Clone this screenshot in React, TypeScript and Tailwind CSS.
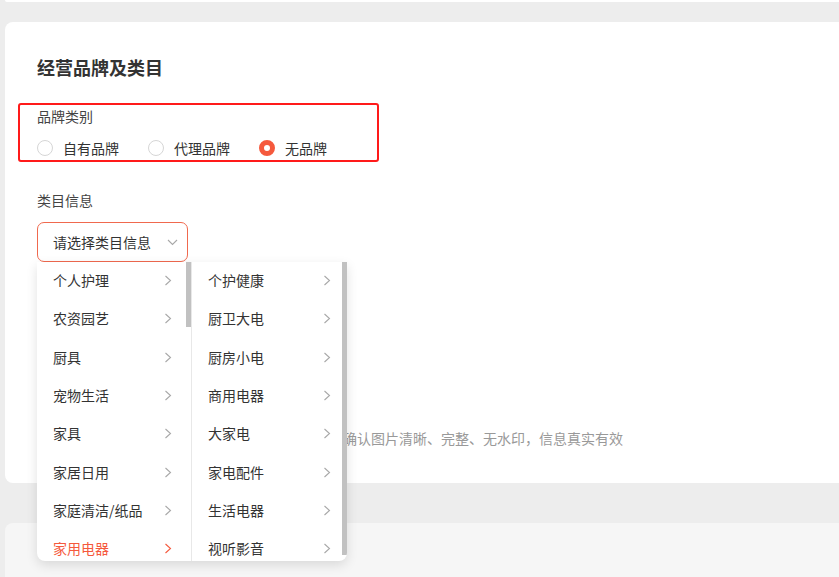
import React from "react";

const col1 = ["个人护理", "农资园艺", "厨具", "宠物生活", "家具", "家居日用", "家庭清洁/纸品", "家用电器"];
const col2 = ["个护健康", "厨卫大电", "厨房小电", "商用电器", "大家电", "家电配件", "生活电器", "视听影音"];

function Chevron({ active }: { active?: boolean }) {
  return (
    <svg width="8" height="11" viewBox="0 0 8 11" fill="none">
      <polyline points="1.5,1 6.5,5.5 1.5,10" stroke={active ? "#f5593d" : "#a8a8a8"} strokeWidth="1.1" />
    </svg>
  );
}

function Radio({ checked, label }: { checked?: boolean; label: string }) {
  return (
    <div className="flex items-center">
      {checked ? (
        <span className="w-4 h-4 rounded-full border-[5px] border-[#f5593d] bg-white box-border" />
      ) : (
        <span className="w-4 h-4 rounded-full border border-[#d6d6d6] bg-white box-border" />
      )}
      <span className="ml-[10px] text-[14px] leading-5 text-[#333]">{label}</span>
    </div>
  );
}

export default function App() {
  return (
    <div
      className="w-[839px] h-[577px] overflow-hidden bg-[#ededed] relative"
      style={{ fontFamily: '"Noto Sans CJK SC", "Noto Sans", sans-serif' }}
    >
      <div className="ml-[5px] w-[860px] h-[2px] bg-white rounded-b-lg" />
      <div className="relative mt-[20px] ml-[5px] w-[860px] h-[461px] bg-white rounded-lg pl-[32px] pt-[32px]">
        <div className="text-[18px] leading-[26px] font-bold text-[#333]">经营品牌及类目</div>

        <div className="mt-[26px] text-[14px] leading-5 text-[#444]">品牌类别</div>
        <div className="mt-[12px] flex items-center">
          <div className="w-[111px]"><Radio label="自有品牌" /></div>
          <div className="w-[111px]"><Radio label="代理品牌" /></div>
          <div><Radio checked label="无品牌" /></div>
        </div>

        <div className="mt-[32px] text-[14px] leading-5 text-[#444]">类目信息</div>
        <div className="relative mt-[12px] w-[151px]">
          <div className="h-[40px] rounded-[7px] border border-[#f0694e] flex items-center pl-[15px] pr-[9px] justify-between">
            <span className="text-[14px] leading-5 text-[#333] -mt-[1px]">请选择类目信息</span>
            <svg width="11" height="7" viewBox="0 0 11 7" fill="none">
              <polyline points="1,1 5.5,5.5 10,1" stroke="#a8a8a8" strokeWidth="1.1" />
            </svg>
          </div>

          <div className="absolute left-0 top-full w-[310px] h-[299px] bg-white rounded-b-lg shadow-[0_4px_12px_rgba(0,0,0,0.12)] flex overflow-hidden z-10">
            <div className="relative w-[155px] border-r border-[#e8e8e8] overflow-hidden">
              {col1.map((t, i) => {
                const active = i === col1.length - 1;
                return (
                  <div key={t} className="h-[38.3px] flex items-center justify-between pl-[16px] pr-[19px] pb-[1px]">
                    <span className={"text-[14px] " + (active ? "text-[#f5593d]" : "text-[#333]")}>{t}</span>
                    <Chevron active={active} />
                  </div>
                );
              })}
              <div className="absolute right-0 top-0 w-[5px] h-[65px] bg-[#c1c1c1]" />
            </div>
            <div className="relative flex-1 overflow-hidden">
              {col2.map((t) => (
                <div key={t} className="h-[38.3px] flex items-center justify-between pl-[16px] pr-[16px] pb-[1px]">
                  <span className="text-[14px] text-[#333]">{t}</span>
                  <Chevron />
                </div>
              ))}
              <div className="absolute right-0 top-0 w-[5px] h-[293px] bg-[#c1c1c1]" />
            </div>
          </div>
        </div>

        <div className="mt-[166px] pl-[306px] text-[14px] leading-5 text-[#999]">
          确认图片清晰、完整、无水印，信息真实有效
        </div>

        <div className="absolute left-[13px] top-[81px] w-[361px] h-[59px] border-2 border-[#ff1a1a] rounded-[3px]" />
      </div>
      <div className="mt-[40px] ml-[5px] w-[860px] h-[100px] bg-[#f6f6f6] rounded-lg" />
    </div>
  );
}
